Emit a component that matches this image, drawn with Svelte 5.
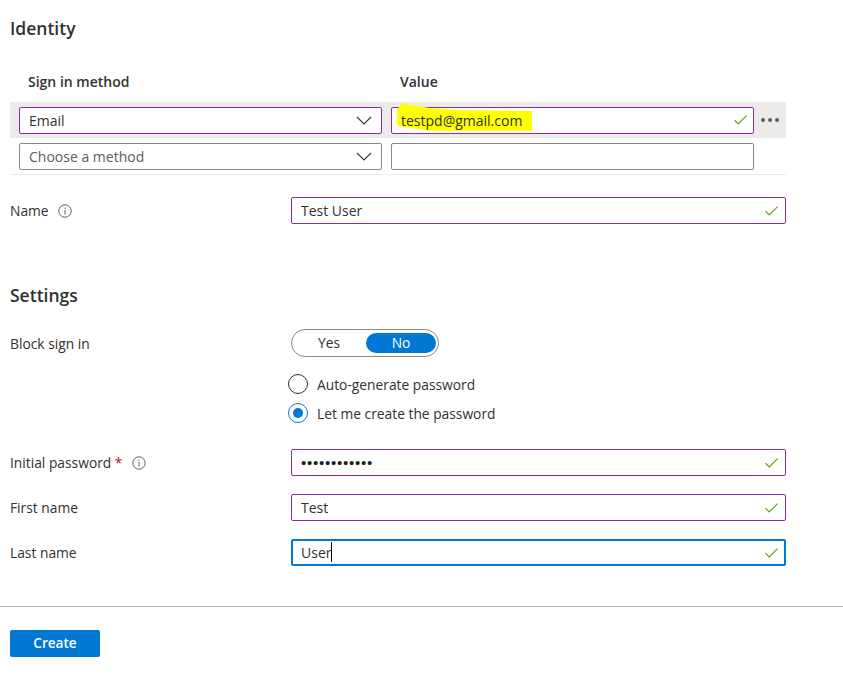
<script lang="ts">
  const methods = [
    { label: 'Email', placeholder: false, active: true, value: 'testpd@gmail.com' },
    { label: 'Choose a method', placeholder: true, active: false, value: '' },
  ];
</script>

{#snippet check()}
  <svg class="check" width="13" height="10" viewBox="0 0 13 10" aria-hidden="true">
    <path d="M0.5 5.2 L4.2 9 L12.6 0.6" fill="none" stroke="#57a300" stroke-width="1.1" />
  </svg>
{/snippet}

{#snippet chevron()}
  <svg class="chevron" width="16" height="9" viewBox="0 0 16 9" aria-hidden="true">
    <path d="M1 1 L8 8 L15 1" fill="none" stroke="#323130" stroke-width="1.1" />
  </svg>
{/snippet}

{#snippet info()}
  <svg class="info" width="14" height="14" viewBox="0 0 14 14" aria-hidden="true">
    <circle cx="7" cy="7" r="6.2" fill="none" stroke="#605e5c" stroke-width="1" />
    <rect x="6.5" y="6" width="1" height="4.5" fill="#605e5c" />
    <rect x="6.5" y="3.6" width="1" height="1.2" fill="#605e5c" />
  </svg>
{/snippet}

<main class="page">
  <section class="identity">
    <h2>Identity</h2>
    <div class="col-heads">
      <span class="col-method">Sign in method</span>
      <span>Value</span>
    </div>

    {#each methods as m}
      <div class="method-row" class:active={m.active}>
        <div class="box select" class:dirty={m.active}>
          <span class:placeholder={m.placeholder}>{m.label}</span>
          {@render chevron()}
        </div>
        <div class="box value" class:dirty={m.active}>
          {#if m.value}
            <svg class="marker" width="138" height="30" viewBox="0 0 138 30" aria-hidden="true">
              <path d="M1 7 L6 0 L14 2 L34 5 L61 7 L136 8 L136 28 L71 28 L37 28 L7 24 L1 22 Z" fill="#ffff00" />
            </svg>
            <span class="value-text">{m.value}</span>
            {@render check()}
          {/if}
        </div>
        {#if m.active}
          <span class="more" aria-hidden="true"><i></i><i></i><i></i></span>
        {/if}
      </div>
    {/each}
    <div class="divider"></div>

    <div class="field name-field">
      <label>Name <span class="name-info">{@render info()}</span></label>
      <div class="box wide dirty"><span>Test User</span>{@render check()}</div>
    </div>
  </section>

  <section class="settings">
    <h2>Settings</h2>
    <div class="field block-field">
      <label>Block sign in</label>
      <div class="toggle">
        <span class="opt">Yes</span>
        <span class="opt on">No</span>
      </div>
    </div>

    <div class="radios">
      <div class="radio-row"><span class="radio"></span><span class="radio-text">Auto-generate password</span></div>
      <div class="radio-row"><span class="radio selected"></span><span class="radio-text">Let me create the password</span></div>
    </div>

    <div class="field pw-field">
      <label>Initial password <b class="req">*</b> <span class="pw-info">{@render info()}</span></label>
      <div class="box wide dirty"><span class="dots">••••••••••••</span>{@render check()}</div>
    </div>
    <div class="field">
      <label>First name</label>
      <div class="box wide dirty"><span>Test</span>{@render check()}</div>
    </div>
    <div class="field">
      <label>Last name</label>
      <div class="box wide focused"><span class="typed">User<i class="caret"></i></span>{@render check()}</div>
    </div>
  </section>

  <footer>
    <button type="button">Create</button>
  </footer>
</main>

<style>
  :global(body) {
    margin: 0;
    background: #fff;
  }
  .page {
    height: 673px;
    overflow: hidden;
    font-family: "Open Sans", "Noto Sans", sans-serif;
    font-size: 13.8px;
    color: #323130;
  }
  section {
    width: 776px;
    margin-left: 10px;
  }
  h2 {
    margin: 0;
    padding-bottom: 2px;
    font-size: 17.5px;
    font-weight: 600;
    line-height: 20px;
  }
  .identity {
    padding-top: 18px;
  }
  .col-heads {
    display: flex;
    margin-top: 31px;
    height: 22px;
    line-height: 22px;
    font-weight: 600;
    font-size: 14px;
  }
  .col-method {
    width: 390px;
    padding-left: 18px;
    box-sizing: border-box;
  }
  .method-row {
    display: flex;
    align-items: center;
    gap: 9px;
    height: 27px;
    padding: 0 9px;
    margin-top: 5px;
  }
  .method-row.active {
    height: 36px;
    margin-top: 9px;
    background: #edebe9;
  }
  .box {
    position: relative;
    display: flex;
    align-items: center;
    justify-content: space-between;
    box-sizing: border-box;
    height: 27px;
    padding: 0 9px;
    background: #fff;
    border: 1px solid #8a8886;
    border-radius: 2px;
    font-size: 14px;
  }
  .box.dirty {
    border-color: #8a2ba3;
  }
  .box.focused {
    border: 2px solid #0078d4;
    padding: 0 8px;
  }
  .wide span {
    margin-bottom: 1px;
  }
  .select, .value {
    width: 363px;
    flex: none;
  }
  .placeholder {
    color: #605e5c;
  }
  .marker {
    position: absolute;
    left: 4px;
    top: -5px;
  }
  .value-text {
    position: relative;
  }
  .check {
    flex: none;
    margin-right: -3px;
  }
  .wide .check {
    margin-right: -2px;
  }
  .chevron {
    flex: none;
  }
  .more {
    display: flex;
    gap: 3px;
    margin-left: -2px;
    margin-top: -1px;
  }
  .more i {
    width: 4px;
    height: 4px;
    border-radius: 50%;
    background: #605e5c;
  }
  .divider {
    height: 1px;
    margin-top: 4px;
    background: #edebe9;
  }
  .field {
    display: flex;
    align-items: center;
    margin-top: 18px;
  }
  .field label {
    display: flex;
    align-items: center;
    width: 281px;
    flex: none;
    white-space: pre;
  }
  .name-field {
    margin-top: 22px;
  }
  .info {
    display: block;
  }
  .name-info {
    margin-left: 6px;
  }
  .pw-info {
    margin-left: 10px;
  }
  .req {
    color: #a4262c;
    font-weight: 400;
  }
  .wide {
    width: 495px;
  }
  .dots {
    font-family: "Liberation Sans", sans-serif;
    font-size: 15px;
    letter-spacing: 0.75px;
    color: #201f1e;
  }
  .typed {
    position: relative;
  }
  .caret {
    position: absolute;
    right: -1px;
    top: -1px;
    width: 1px;
    height: 20px;
    background: #000;
  }
  .settings {
    padding-top: 61px;
  }
  .block-field {
    margin-top: 22px;
  }
  .toggle {
    display: flex;
    align-items: center;
    box-sizing: border-box;
    width: 148px;
    height: 28px;
    padding: 0 2px 0 0;
    border: 1px solid #8a8886;
    border-radius: 14px;
  }
  .opt {
    flex: 1;
    height: 20px;
    line-height: 19px;
    text-align: center;
    border-radius: 10px;
  }
  .opt.on {
    flex: none;
    width: 70px;
    background: #0078d4;
    color: #fff;
  }
  .radios {
    margin: 12px 0 0 278px;
  }
  .radio-row {
    display: flex;
    align-items: center;
    gap: 9px;
    height: 29px;
  }
  .radio-text {
    margin-top: 2px;
  }
  .radio {
    position: relative;
    box-sizing: border-box;
    width: 20px;
    height: 20px;
    border: 1px solid #323130;
    border-radius: 50%;
    flex: none;
  }
  .radio.selected {
    border-color: #0078d4;
  }
  .radio.selected::after {
    content: "";
    position: absolute;
    left: 4px;
    top: 4px;
    width: 10px;
    height: 10px;
    border-radius: 50%;
    background: #0078d4;
  }
  .pw-field {
    margin-top: 22px;
  }
  footer {
    margin-top: 40px;
    padding: 23px 10px 0;
    border-top: 1px solid #b9b9b9;
  }
  button {
    display: block;
    width: 90px;
    height: 27px;
    padding: 0 0 2px;
    border: 0;
    border-radius: 2px;
    background: #0078d4;
    color: #fff;
    font: 600 13.6px "Open Sans", sans-serif;
  }
</style>
